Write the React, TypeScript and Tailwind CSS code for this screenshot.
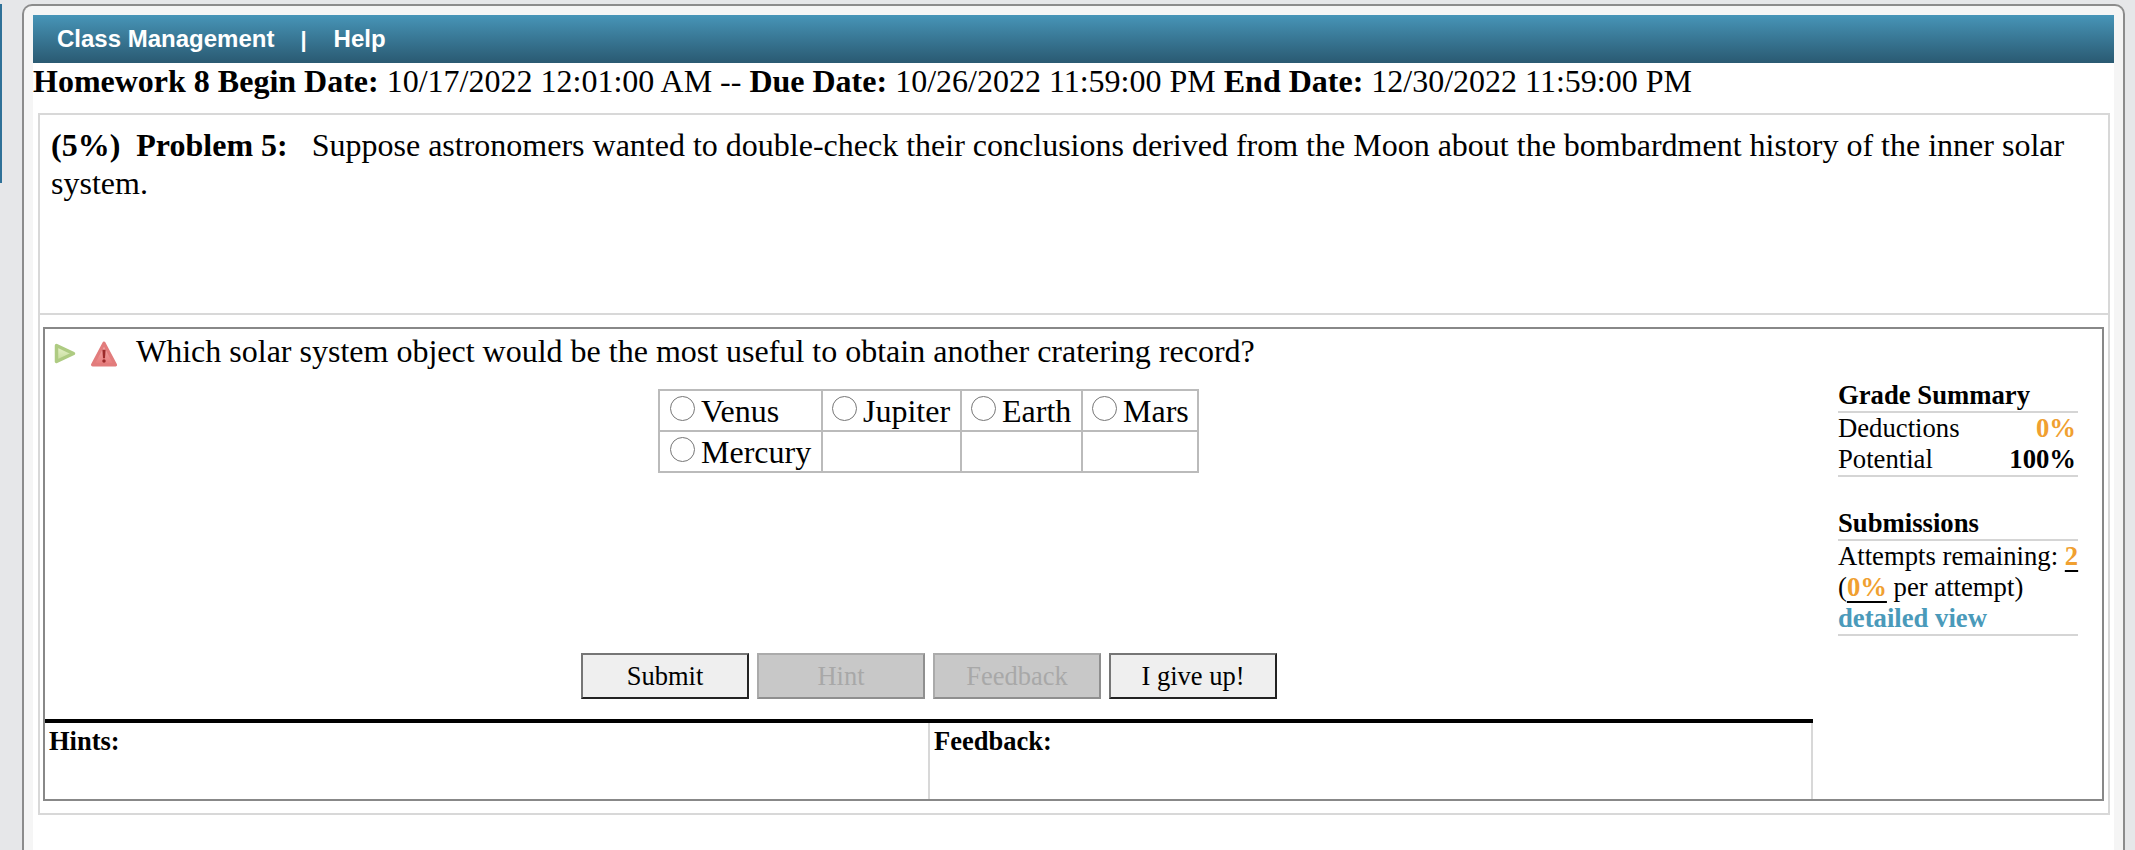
const serif = 'font-["Liberation_Serif","Times_New_Roman",serif]';

function PlayIcon() {
  return (
    <svg width="22" height="21" viewBox="0 0 22 21" className="shrink-0">
      <defs>
        <linearGradient id="playFill" x1="0" y1="0" x2="0" y2="1">
          <stop offset="0" stopColor="#e8f2cc" />
          <stop offset="1" stopColor="#c4dc98" />
        </linearGradient>
      </defs>
      <path d="M2.5 2.5 L19.5 10.5 L2.5 18.5 Z" fill="url(#playFill)" stroke="#aecb82" strokeWidth="3.5" strokeLinejoin="round" />
    </svg>
  );
}

function WarningIcon() {
  return (
    <svg width="26" height="26" viewBox="0 0 24 24" className="shrink-0">
      <defs>
        <linearGradient id="warnFill" x1="0" y1="0" x2="0" y2="1">
          <stop offset="0" stopColor="#f4b0b0" />
          <stop offset="1" stopColor="#e67a7a" />
        </linearGradient>
      </defs>
      <path d="M12 2 L22.5 22 L1.5 22 Z" fill="url(#warnFill)" stroke="#e27c7c" strokeWidth="3" strokeLinejoin="round" />
      <path d="M10.5 8 L13.5 8 L12.9 16 L11.1 16 Z" fill="#9c2a2a" />
      <circle cx="12" cy="18.5" r="1.6" fill="#9c2a2a" />
    </svg>
  );
}

function Choice({ label }: { label: string }) {
  return (
    <label className="flex items-center gap-[6px] whitespace-nowrap">
      <input type="radio" name="choice" className="mb-[5px] h-[25px] w-[25px] shrink-0" />
      <span>{label}</span>
    </label>
  );
}

function Btn({ label, disabled }: { label: string; disabled?: boolean }) {
  return (
    <button
      disabled={disabled}
      className={`h-[46px] w-[168px] border-2 text-[26.5px] leading-none ${
        disabled
          ? 'border-t-[#ababab] border-l-[#ababab] border-r-[#8f8f8f] border-b-[#8f8f8f] bg-[#c8c8c8] text-[#a8a8a8]'
          : 'border-t-[#767676] border-l-[#767676] border-r-[#222222] border-b-[#222222] bg-[#efefef] text-black'
      }`}
    >
      {label}
    </button>
  );
}

export default function App() {
  return (
    <div className={`flex h-[850px] w-[2135px] overflow-hidden bg-[#e6e7e9] text-black ${serif}`}>
      <div className="mt-[4px] h-[179px] w-[2px] shrink-0 bg-[#2f7198]" />

      <div className="ml-[20px] mt-[4px] flex w-[2103px] flex-col rounded-t-[10px] border-x-2 border-t-2 border-[#8c8c8c] bg-[#f5f5f5] px-[9px] pt-[9px]">
        <div className="flex h-full flex-col bg-white">
          <div className="flex h-[48px] shrink-0 items-center bg-gradient-to-b from-[#4795b8] to-[#2a5a72] pl-[24px] font-['Liberation_Sans',Arial,sans-serif] text-[24px] font-bold text-white">
            <span>Class Management</span>
            <span className="ml-[26px] text-[22px]">|</span>
            <span className="ml-[27px]">Help</span>
          </div>

          <div className="h-[50px] shrink-0 text-[32px] leading-[37px] whitespace-nowrap">
            <b>Homework 8 Begin Date:</b> 10/17/2022 12:01:00 AM -- <b>Due Date:</b> 10/26/2022 11:59:00 PM <b>End Date:</b> 12/30/2022 11:59:00 PM
          </div>

          <div className="ml-[5px] mr-[4px] h-[702px] shrink-0 border-2 border-[#d8d8d8]">
            <div className="h-[200px] border-b-2 border-[#d8d8d8] pl-[11px] pt-[11px] text-[32px] leading-[38px] whitespace-nowrap">
              <div>
                <b>(5%)&nbsp;&nbsp;Problem 5:</b>&nbsp;&nbsp;&nbsp;Suppose astronomers wanted to double-check their conclusions derived from the Moon about the bombardment history of the inner solar
              </div>
              <div>system.</div>
            </div>

            <div className="ml-[3px] mr-[4px] mt-[12px] flex h-[474px] border-2 border-[#888888]">
              <div className="flex w-[1768px] shrink-0 flex-col">
                <div className="flex h-[60px] items-start pl-[9px] pt-[4px]">
                  <div className="mt-[10px]"><PlayIcon /></div>
                  <div className="ml-[15px] mt-[8px]"><WarningIcon /></div>
                  <div className="ml-[19px] text-[32px] leading-[36px] whitespace-nowrap">Which solar system object would be the most useful to obtain another cratering record?</div>
                </div>

                <table className="ml-[613px] h-[84px] w-[541px] table-fixed border-collapse text-[32px] leading-none">
                  <tbody>
                    <tr>
                      <td className="w-[163px] border-2 border-[#bbbbbb] pl-[10px]"><Choice label="Venus" /></td>
                      <td className="w-[139px] border-2 border-[#bbbbbb] pl-[9px]"><Choice label="Jupiter" /></td>
                      <td className="w-[121px] border-2 border-[#bbbbbb] pl-[9px]"><Choice label="Earth" /></td>
                      <td className="border-2 border-[#bbbbbb] pl-[9px]"><Choice label="Mars" /></td>
                    </tr>
                    <tr>
                      <td className="border-2 border-[#bbbbbb] pl-[10px]"><Choice label="Mercury" /></td>
                      <td className="border-2 border-[#bbbbbb]" />
                      <td className="border-2 border-[#bbbbbb]" />
                      <td className="border-2 border-[#bbbbbb]" />
                    </tr>
                  </tbody>
                </table>

                <div className="mt-[180px] flex justify-center gap-[8px]">
                  <Btn label="Submit" />
                  <Btn label="Hint" disabled />
                  <Btn label="Feedback" disabled />
                  <Btn label="I give up!" />
                </div>

                <div className="mt-[20px] flex h-[80px] border-t-4 border-black text-[26.5px] font-bold leading-[36px]">
                  <div className="w-[885px] border-r-2 border-[#d8d8d8] pl-[4px]">Hints:</div>
                  <div className="flex-1 border-r-2 border-[#d8d8d8] pl-[4px]">Feedback:</div>
                </div>
              </div>

              <div className="ml-[25px] w-[240px] pt-[51px] text-[26.7px] leading-[31px] whitespace-nowrap">
                <div className="border-b-2 border-[#d5d5d5] font-bold">Grade Summary</div>
                <div className="flex justify-between pr-[2px]">
                  <span>Deductions</span>
                  <b className="text-[#f0a030]">0%</b>
                </div>
                <div className="flex justify-between border-b-2 border-[#d5d5d5] pr-[2px]">
                  <span>Potential</span>
                  <b>100%</b>
                </div>

                <div className="mt-[31px] border-b-2 border-[#d5d5d5] font-bold">Submissions</div>
                <div>
                  Attempts remaining: <b className="text-[#f0a030] underline decoration-black decoration-2 underline-offset-[5px]">2</b>
                </div>
                <div>
                  (<b className="text-[#f0a030] underline decoration-black decoration-2 underline-offset-[5px]">0%</b> per attempt)
                </div>
                <div className="border-b-2 border-[#d5d5d5] font-bold text-[#4a9aba]">detailed view</div>
              </div>
            </div>
          </div>
        </div>
      </div>
    </div>
  );
}
